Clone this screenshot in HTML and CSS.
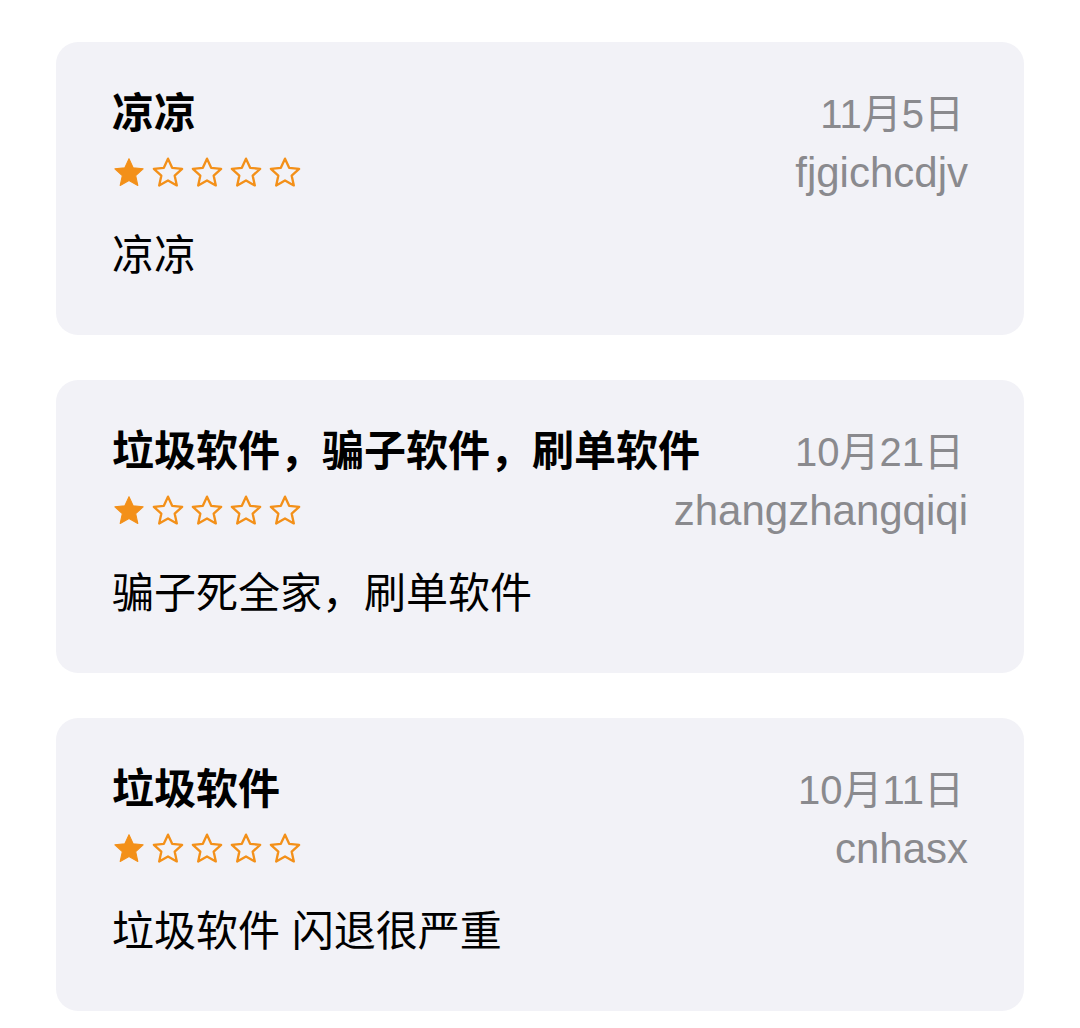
FILE: index.html
```html
<!DOCTYPE html>
<html lang="zh">
<head>
  <meta charset="UTF-8" />
  <meta name="viewport" content="width=device-width, initial-scale=1.0"/>
  <title>评论</title>
  <link rel="stylesheet" href="styles.css">
</head>
<body>
  <svg width="0" height="0" class="defs">
    <defs>
      <path id="star" d="M16 2.5l3.9 8.6 9.4 1-7 6.4 2 9.2L16 23l-8.3 4.7 2-9.2-7-6.4 9.4-1z"/>
    </defs>
  </svg>

  <div class="list">
    <div class="review">
      <div class="row">
        <div class="title">凉凉</div>
        <div class="date">11月5日</div>
      </div>
      <div class="row meta">
        <div class="stars">
          <svg viewBox="0 0 32 32" class="on"><use href="#star"/></svg>
          <svg viewBox="0 0 32 32"><use href="#star"/></svg>
          <svg viewBox="0 0 32 32"><use href="#star"/></svg>
          <svg viewBox="0 0 32 32"><use href="#star"/></svg>
          <svg viewBox="0 0 32 32"><use href="#star"/></svg>
        </div>
        <div class="user">fjgichcdjv</div>
      </div>
      <p class="body">凉凉</p>
    </div>

    <div class="review">
      <div class="row">
        <div class="title">垃圾软件，骗子软件，刷单软件</div>
        <div class="date">10月21日</div>
      </div>
      <div class="row meta">
        <div class="stars">
          <svg viewBox="0 0 32 32" class="on"><use href="#star"/></svg>
          <svg viewBox="0 0 32 32"><use href="#star"/></svg>
          <svg viewBox="0 0 32 32"><use href="#star"/></svg>
          <svg viewBox="0 0 32 32"><use href="#star"/></svg>
          <svg viewBox="0 0 32 32"><use href="#star"/></svg>
        </div>
        <div class="user">zhangzhangqiqi</div>
      </div>
      <p class="body">骗子死全家，刷单软件</p>
    </div>

    <div class="review">
      <div class="row">
        <div class="title">垃圾软件</div>
        <div class="date">10月11日</div>
      </div>
      <div class="row meta">
        <div class="stars">
          <svg viewBox="0 0 32 32" class="on"><use href="#star"/></svg>
          <svg viewBox="0 0 32 32"><use href="#star"/></svg>
          <svg viewBox="0 0 32 32"><use href="#star"/></svg>
          <svg viewBox="0 0 32 32"><use href="#star"/></svg>
          <svg viewBox="0 0 32 32"><use href="#star"/></svg>
        </div>
        <div class="user">cnhasx</div>
      </div>
      <p class="body">垃圾软件 闪退很严重</p>
    </div>
  </div>
</body>
</html>
```

FILE: styles.css
```css
body {
  margin: 0;
  background: #fff;
  font-family: "Liberation Sans", "Noto Sans CJK SC", sans-serif;
  color: #000;
}
.defs { position: absolute; }
.list {
  display: flex;
  flex-direction: column;
  gap: 45px;
  padding: 42px 56px;
}
.review {
  background: #f2f2f7;
  border-radius: 22px;
  padding: 46px 56px 0;
  height: 293px;
  box-sizing: border-box;
}
.row {
  display: flex;
  justify-content: space-between;
  align-items: center;
}
.row.meta { margin-top: 8px; }
.title {
  font-size: 42px;
  font-weight: bold;
  line-height: 52px;
}
.date {
  font-size: 40px;
  line-height: 52px;
  color: #8a8a8e;
  padding-right: 4px;
}
.stars {
  display: flex;
  gap: 5px;
  height: 50px;
  align-items: center;
}
.stars svg {
  width: 34px;
  height: 34px;
  fill: none;
  stroke: #f39019;
  stroke-width: 2.2;
  stroke-linejoin: round;
}
.stars svg.on { fill: #f39019; stroke-width: 1; }
.user {
  font-size: 42px;
  line-height: 50px;
  color: #8a8a8e;
}
.body {
  margin: 32px 0 0;
  font-size: 42px;
  line-height: 52px;
}
```
